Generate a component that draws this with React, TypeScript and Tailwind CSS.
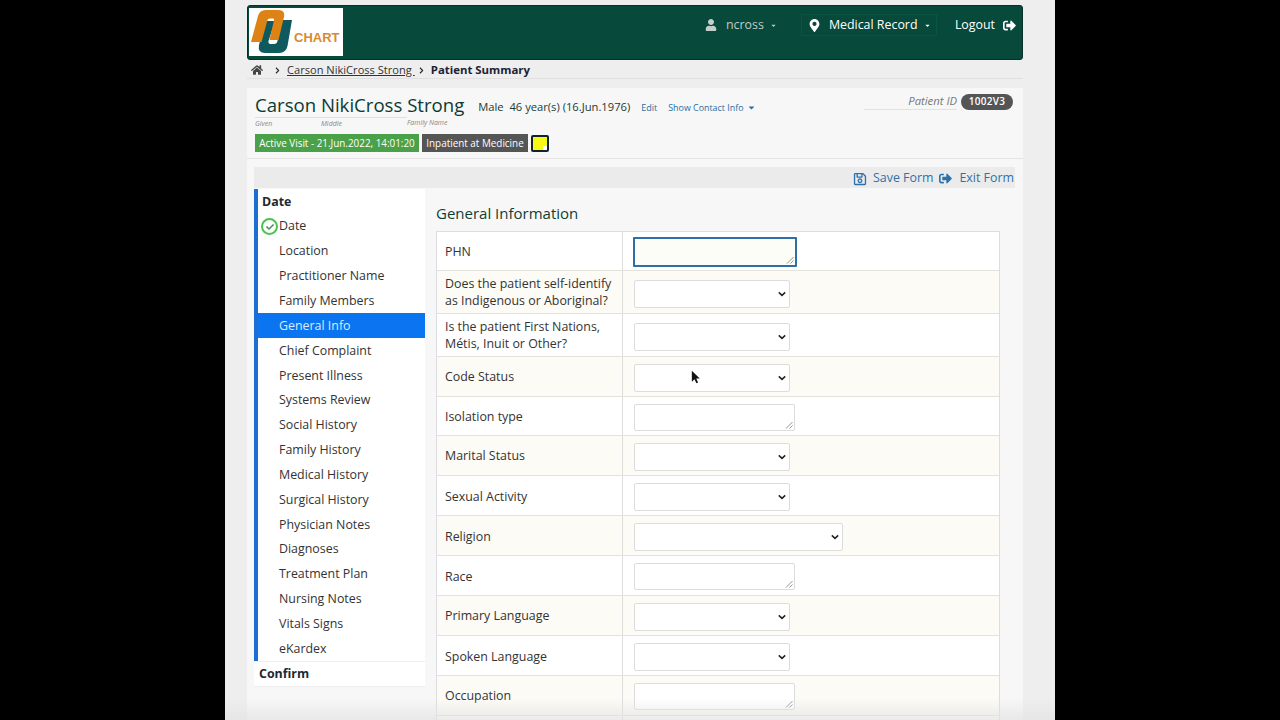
import React from "react";
import { FaHome, FaUser, FaMapMarkerAlt, FaSignOutAlt, FaRegSave, FaCaretDown, FaChevronRight, FaCheck } from "react-icons/fa";

const navItems = ["Location","Practitioner Name","Family Members","General Info","Chief Complaint","Present Illness","Systems Review","Social History","Family History","Medical History","Surgical History","Physician Notes","Diagnoses","Treatment Plan","Nursing Notes","Vitals Signs","eKardex"];

type Row = { label: string[]; kind: "focus" | "text" | "select" | "wide"; h: string; tint?: boolean; low?: boolean; lowField?: boolean };
const rows: Row[] = [
  { label: ["PHN"], kind: "focus", h: "h-[39px]" },
  { label: ["Does the patient self-identify", "as Indigenous or Aboriginal?"], kind: "select", h: "h-[43px]", tint: true, lowField: true },
  { label: ["Is the patient First Nations,", "Métis, Inuit or Other?"], kind: "select", h: "h-[43px]", lowField: true },
  { label: ["Code Status"], kind: "select", h: "h-[40px]", tint: true },
  { label: ["Isolation type"], kind: "text", h: "h-[39px]" },
  { label: ["Marital Status"], kind: "select", h: "h-[40px]", tint: true },
  { label: ["Sexual Activity"], kind: "select", h: "h-[40px]", low: true },
  { label: ["Religion"], kind: "wide", h: "h-[40px]", tint: true, low: true },
  { label: ["Race"], kind: "text", h: "h-[40px]", low: true },
  { label: ["Primary Language"], kind: "select", h: "h-[40px]", tint: true },
  { label: ["Spoken Language"], kind: "select", h: "h-[40px]", low: true },
  { label: ["Occupation"], kind: "text", h: "h-[40px]", tint: true },
  { label: [""], kind: "text", h: "h-[40px]" },
];

function Grip() {
  return (
    <svg viewBox="0 0 8 8" className="absolute bottom-[1px] right-[1px] h-2 w-2">
      <path d="M1 7.5 L7.5 1 M4.5 7.5 L7.5 4.5" stroke="#777" strokeWidth="0.8" fill="none" />
    </svg>
  );
}

function Chevron() {
  return (
    <svg viewBox="0 0 10 7" className="h-[6px] w-[8px]">
      <path d="M1 1.5 L5 5.2 L9 1.5" stroke="#222" strokeWidth="1.9" fill="none" />
    </svg>
  );
}

function Field({ kind }: { kind: Row["kind"] }) {
  if (kind === "focus") {
    return (
      <div className="relative h-[30px] w-[164px] rounded-[1px] border-2 border-[#2f6fa8] bg-[#fdfdf8]"><Grip /></div>
    );
  }
  if (kind === "text") {
    return <div className="relative h-[27px] w-[161px] rounded-[2px] border border-[#dcdcdc] bg-white"><Grip /></div>;
  }
  return (
    <div className={`flex h-[28px] items-center justify-end rounded-[2px] border border-[#dcdcdc] bg-white pr-[2px] ${kind === "wide" ? "w-[209px]" : "w-[156px]"}`}>
      <span className="flex w-[10px] justify-center"><Chevron /></span>
    </div>
  );
}

function Logo() {
  return (
    <div className="relative flex h-[48px] w-[94px] items-center bg-white">
      <svg viewBox="0 0 50 48" className="absolute left-0 top-0 h-[48px] w-[50px]">
        <path d="M16.500 13 L10 37 Q8.500 45 16 45 H30 Q37 45 38.500 38 L43 12 H33 L28.500 33 Q28 36 25 36 H21.500 Q19 36 19.500 33 L26 13 Z" fill="#0f5a5e" />
        <path d="M2 34 L9 8 Q10.500 2 17 2 H29 Q36.500 2 35 9 L29.500 32 H20.500 L25 12 Q25.500 10.500 24 10.500 H20.500 Q19 10.500 18.500 12 L12.500 34 Z" fill="#dd8214" />
      </svg>
      <span className="absolute left-[45px] top-[22px] font-['Liberation_Sans',sans-serif] text-[13px] font-bold leading-[16px] text-[#d98a2b]">CHART</span>
    </div>
  );
}

export default function App() {
  return (
    <div className="flex h-[720px] w-[1280px] justify-center overflow-hidden bg-black font-['Open_Sans',sans-serif] text-[12.4px] text-[#222]">
      <div className="relative h-full w-[830px] overflow-hidden bg-[#eeeeee]">
        <div className="flex h-full flex-col pl-[22px] pr-[32px] pt-[5px]">
          <header className="flex h-[55px] shrink-0 items-start justify-between rounded-[3px] border border-[#0a2f26] bg-[#07493a] pl-[1px] pr-[6px] pt-[2px]">
            <Logo />
            <div className="flex items-center pt-[6px] text-[12.4px]">
              <FaUser className="h-[12px] w-[12px] text-[#c3cfca]" />
              <span className="ml-[9px] text-[#c0ccc8]">ncross</span>
              <FaCaretDown className="ml-[6px] h-[7px] w-[7px] text-[#c0ccc8]" />
              <div className="ml-[24px] flex h-[22px] w-[136px] items-center border border-[#0c5442] pl-[7px] text-white">
                <FaMapMarkerAlt className="h-[13px] w-[11px]" />
                <span className="ml-[9px]">Medical Record</span>
                <FaCaretDown className="ml-[6px] h-[7px] w-[7px]" />
              </div>
              <span className="ml-[18px] text-white">Logout</span>
              <FaSignOutAlt className="ml-[8px] h-[13px] w-[13px] text-white" />
            </div>
          </header>

          <nav className="flex h-[19px] shrink-0 items-center border-b border-[#e0e0e0] pl-[4px] pt-[2px] text-[11.1px] text-[#333]">
            <FaHome className="h-[12px] w-[12px] text-[#444]" />
            <FaChevronRight className="ml-[11px] h-[7px] w-[7px] text-[#222]" />
            <span className="ml-[6px] underline">Carson NikiCross Strong&nbsp;</span>
            <FaChevronRight className="ml-[3px] h-[7px] w-[7px] text-[#222]" />
            <span className="ml-[6px] text-[11.4px] font-bold text-[#1c2233]">Patient Summary</span>
          </nav>

          <section className="mt-[9px] h-[71px] shrink-0 border-b border-[#e4e4e4] bg-[#f7f7f7] pl-[8px] pr-[10px]">
            <div className="flex items-start justify-between">
              <div>
                <div className="flex items-center pt-[5px]">
                  <span className="text-[18.6px] leading-[24px] text-[#0c3a33]">Carson NikiCross Strong</span>
                  <span className="ml-[14px] mt-[4px] text-[11.2px] text-[#1b3a36]">Male&nbsp; 46 year(s) (16.Jun.1976)</span>
                  <span className="ml-[11px] mt-[6px] text-[9px] text-[#2c6e9e]">Edit</span>
                  <span className="ml-[11px] mt-[6px] text-[8.9px] text-[#2c6e9e]">Show Contact Info</span>
                  <FaCaretDown className="ml-[3px] mt-[4px] h-[9px] w-[9px] text-[#2c6e9e]" />
                </div>
                <div className="flex h-[12px] text-[7px] italic leading-[12px] text-[#888]">
                  <span className="w-[66px] border-t border-[#e0e0e0]">Given</span>
                  <span className="w-[86px] border-t border-[#e0e0e0]">Middle</span>
                  <span>Family Name</span>
                </div>
              </div>
              <div className="flex items-center pt-[5px]">
                <span className="border-b border-[#e2e2e2] pl-[44px] text-[11.3px] italic leading-[16px] text-[#777]">Patient ID</span>
                <span className="ml-[4px] flex h-[16px] w-[52px] items-center justify-center rounded-full bg-[#555] text-[10px] font-semibold tracking-[0.3px] text-white">1002V3</span>
              </div>
            </div>
            <div className="mt-[5px] flex items-center">
              <span className="flex h-[18px] w-[164px] items-center justify-center bg-[#4ba149] text-[9.9px] text-white">Active Visit - 21.Jun.2022, 14:01:20</span>
              <span className="ml-[3px] flex h-[18px] w-[106px] items-center justify-center bg-[#555] text-[9.9px] text-white">Inpatient at Medicine</span>
              <span className="relative ml-[3px] h-[17px] w-[18px] rounded-[2px] border-2 border-[#123] bg-[#f8f815]">
                <span className="absolute bottom-0 right-0 h-[4px] w-[4px] bg-white" />
              </span>
            </div>
          </section>

          <main className="flex-1 bg-[#f7f7f7] pl-[7px] pr-[8px] pt-[8px]">
            <div className="flex h-[21px] items-center justify-end bg-[#ebebeb] pr-[1px] pt-[2px] text-[12.4px] text-[#2b72ad]">
              <FaRegSave className="h-[14px] w-[14px]" />
              <span className="ml-[6px]">Save Form</span>
              <FaSignOutAlt className="ml-[6px] h-[13px] w-[13px]" />
              <span className="ml-[7px]">Exit Form</span>
            </div>
            <div className="mt-[1px] flex">
              <aside className="w-[171px] shrink-0">
                <div className="border-l-[4px] border-[#1a6fd0] bg-white">
                  <div className="flex h-[24.85px] items-center pl-[4px] pt-[2px] font-bold text-[#1b2a33]">Date</div>
                  <div className="flex h-[24.85px] items-center pl-[3px] pt-[1px] text-[#333]">
                    <span className="flex h-[17px] w-[17px] items-center justify-center rounded-full border-2 border-[#4fc14f] bg-white">
                      <FaCheck className="h-[8px] w-[8px] text-[#4a8f5a]" />
                    </span>
                    <span className="ml-[1px]">Date</span>
                  </div>
                  {navItems.map((n) => (
                    <div key={n} className={`flex h-[24.85px] items-center pl-[21px] pt-[1px] ${n === "General Info" ? "bg-[#0b74f0] text-[#d8ecff]" : "text-[#333]"}`}>{n}</div>
                  ))}
                </div>
                <div className="flex h-[26px] items-center border-y border-[#eeeeee] bg-white pl-[5px] pt-[1px] font-bold text-[#1b2a33]">Confirm</div>
              </aside>
              <div className="ml-[11px] w-[564px]">
                <h2 className="flex h-[42px] items-center pt-[6px] text-[15px] text-[#0c3f36]">General Information</h2>
                <div className="border border-[#dcdce2] bg-white">
                  {rows.map((r, i) => (
                    <div key={i} className={`flex items-center border-b border-[#e4e2dc] ${r.h} ${r.tint ? "bg-[#fcfbf6]" : "bg-white"}`}>
                      <div className={`flex h-full w-[186px] shrink-0 flex-col justify-center border-r border-[#dddddd] pl-[8px] leading-[17px] text-[#333] ${r.low ? "pt-[2px]" : ""}`}>
                        {r.label.map((l, j) => <div key={j}>{l}</div>)}
                      </div>
                      <div className={`${r.lowField ? "pt-[4px]" : "pt-[2px]"} ${r.kind === "focus" ? "pl-[10px]" : "pl-[11px]"}`}><Field kind={r.kind} /></div>
                    </div>
                  ))}
                </div>
              </div>
            </div>
          </main>
        </div>
        <svg viewBox="0 0 12 18" className="absolute left-[466px] top-[370px] h-[15px] w-[10px]">
          <path d="M1 1 V14 L4.200 11 L6.500 16 L8.500 15 L6.300 10.200 H10.500 Z" fill="#111" />
        </svg>
        <div className="absolute inset-x-0 bottom-0 h-[22px] bg-gradient-to-b from-transparent to-[#e2e2e2]/70" />
      </div>
    </div>
  );
}
